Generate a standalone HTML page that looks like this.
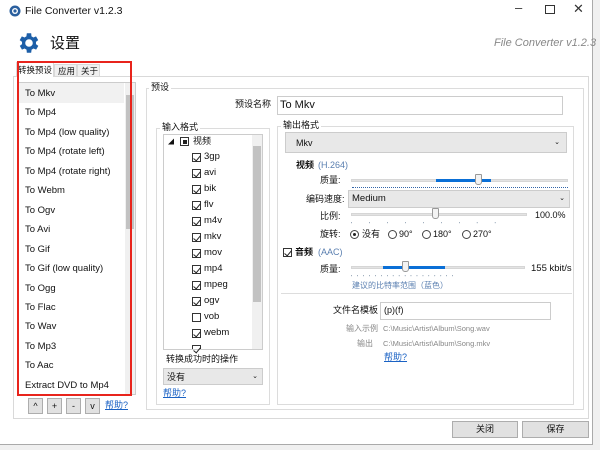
<!DOCTYPE html>
<html><head><meta charset="utf-8"><style>
*{box-sizing:border-box;margin:0;padding:0}
body{width:600px;height:450px;background:#f0f0f0;font-family:"Liberation Sans","Noto Sans CJK SC",sans-serif;font-size:9px;line-height:12px;color:#111;position:relative;overflow:hidden}
.a{position:absolute;white-space:nowrap}
.win{position:absolute;left:0;top:0;width:593px;height:445px;background:#fff;border-right:1px solid #aaa;border-bottom:1px solid #aaa}
.box{position:absolute;border:1px solid #dcdcdc}
.btn{position:absolute;background:#e1e1e1;border:1px solid #adadad;text-align:center;font-size:9px;line-height:14px}
.cb{position:absolute;width:9px;height:9px;border:1px solid #333;background:#fff}
.cb.c::after{content:"";position:absolute;left:2px;top:0px;width:3px;height:6px;border:solid #222;border-width:0 1.3px 1.3px 0;transform:rotate(40deg)}
.lnk{color:#1a62c4;text-decoration:underline}
.trk{position:absolute;height:3px;background:#e3e3e3;border:1px solid #d6d6d6}
.blue{position:absolute;height:3px;background:#0a6fd6}
.th{position:absolute;width:7px;height:11px;background:#f3f3f3;border:1px solid #999;border-radius:1px 1px 3px 3px}
.rd{position:absolute;width:9px;height:9px;border:1px solid #444;border-radius:50%;background:#fff}
</style></head><body>
<div class="win"></div>
<svg class="a" style="left:9px;top:5px" width="12" height="12" viewBox="0 0 12 12"><circle cx="6" cy="6" r="5.5" fill="#2a5f9e"/><circle cx="6" cy="6" r="3" fill="#fff"/><circle cx="6" cy="6" r="1.6" fill="#2a5f9e"/></svg>
<div class="a" style="left:25px;top:4px;font-size:10.5px;line-height:14px">File Converter v1.2.3</div>
<div class="a" style="left:515px;top:2px;font-size:13px;color:#333">–</div>
<div class="a" style="left:545px;top:5px;width:10px;height:9px;border:1px solid #333"></div>
<div class="a" style="left:573px;top:3px;font-size:13px;color:#333">✕</div>
<svg class="a" style="left:16px;top:30px" width="26" height="26" viewBox="0 0 24 24"><path fill="#1d5fa8" fill-rule="evenodd" d="M19.4 13a7.5 7.5 0 0 0 0-2l2.1-1.6-2-3.5-2.5 1a7.5 7.5 0 0 0-1.7-1L15 3h-4l-.4 2.9a7.5 7.5 0 0 0-1.7 1l-2.5-1-2 3.5L6.6 11a7.5 7.5 0 0 0 0 2l-2.1 1.6 2 3.5 2.5-1a7.5 7.5 0 0 0 1.7 1L11 21h4l.4-2.9a7.5 7.5 0 0 0 1.7-1l2.5 1 2-3.5zM13 15.5A3.5 3.5 0 1 1 13 8.5a3.5 3.5 0 0 1 0 7z" transform="translate(-1 0)"/></svg>
<div class="a" style="left:50px;top:34px;font-size:15px;line-height:20px">设置</div>
<div class="a" style="left:494px;top:37px;font-size:11px;font-style:italic;color:#888">File Converter v1.2.3</div>
<!-- tabs -->
<div class="box" style="left:13px;top:76px;width:576px;height:343px;border-color:#d9d9d9"></div>
<div class="a" style="left:16px;top:62px;width:38px;height:15px;background:#fff;border:1px solid #d9d9d9;border-bottom:none;font-size:8.5px;padding:1px 0 0 1px">转换预设</div>
<div class="a" style="left:54px;top:64px;width:23px;height:13px;background:#f0f0f0;border:1px solid #d9d9d9;font-size:8.5px;padding:0 0 0 3px">应用</div>
<div class="a" style="left:77px;top:64px;width:23px;height:13px;background:#f0f0f0;border:1px solid #d9d9d9;font-size:8.5px;padding:0 0 0 3px">关于</div>
<!-- list -->
<div class="box" style="left:18px;top:82px;width:118px;height:313px;border-color:#ccc"></div>
<div class="a" style="left:19px;top:83px;width:105px;height:20px;background:#f1f1f1"></div>
<div class="a" style="left:125px;top:83px;width:10px;height:311px;background:#f0f0f0"></div>
<div class="a" style="left:126px;top:95px;width:8px;height:134px;background:#c2c2c2"></div>
<div class="a" style="left:25px;top:84px;font-size:9.5px;line-height:19.45px">To Mkv<br>To Mp4<br>To Mp4 (low quality)<br>To Mp4 (rotate left)<br>To Mp4 (rotate right)<br>To Webm<br>To Ogv<br>To Avi<br>To Gif<br>To Gif (low quality)<br>To Ogg<br>To Flac<br>To Wav<br>To Mp3<br>To Aac<br>Extract DVD to Mp4</div>
<div class="a" style="left:17px;top:61px;width:115px;height:335px;border:2px solid #e8241c"></div>
<div class="btn" style="left:28px;top:398px;width:15px;height:16px">^</div>
<div class="btn" style="left:47px;top:398px;width:15px;height:16px">+</div>
<div class="btn" style="left:66px;top:398px;width:15px;height:16px">-</div>
<div class="btn" style="left:85px;top:398px;width:15px;height:16px">v</div>
<div class="a lnk" style="left:105px;top:399px">帮助?</div>
<!-- preset group -->
<div class="box" style="left:146px;top:88px;width:438px;height:322px"></div>
<div class="a" style="left:149px;top:81px;background:#fff;padding:0 2px">预设</div>
<div class="a" style="left:235px;top:98px">预设名称</div>
<div class="a" style="left:277px;top:96px;width:286px;height:19px;border:1px solid #ccc;font-size:11px;line-height:15px;padding:1px 2px">To Mkv</div>
<!-- input group -->
<div class="box" style="left:156px;top:128px;width:114px;height:277px"></div>
<div class="a" style="left:160px;top:121px;background:#fff;padding:0 2px">输入格式</div>
<div class="a" style="left:163px;top:134px;width:100px;height:216px;border:1px solid #ccc"></div>
<div class="a" style="left:252px;top:135px;width:10px;height:214px;background:#f0f0f0"></div>
<div class="a" style="left:253px;top:146px;width:8px;height:156px;background:#c2c2c2"></div>
<div class="a" style="left:168px;top:137px;font-size:6px">◢</div>
<div class="cb" style="left:180px;top:137px"><div style="position:absolute;left:1.5px;top:1.5px;width:4px;height:4px;background:#222"></div></div>
<div class="a" style="left:193px;top:135px">视频</div>
<div class="cb c" style="left:192px;top:153px"></div><div class="a" style="left:204px;top:151px;font-size:9.5px">3gp</div>
<div class="cb c" style="left:192px;top:169px"></div><div class="a" style="left:204px;top:167px;font-size:9.5px">avi</div>
<div class="cb c" style="left:192px;top:185px"></div><div class="a" style="left:204px;top:183px;font-size:9.5px">bik</div>
<div class="cb c" style="left:192px;top:201px"></div><div class="a" style="left:204px;top:199px;font-size:9.5px">flv</div>
<div class="cb c" style="left:192px;top:217px"></div><div class="a" style="left:204px;top:215px;font-size:9.5px">m4v</div>
<div class="cb c" style="left:192px;top:233px"></div><div class="a" style="left:204px;top:231px;font-size:9.5px">mkv</div>
<div class="cb c" style="left:192px;top:249px"></div><div class="a" style="left:204px;top:247px;font-size:9.5px">mov</div>
<div class="cb c" style="left:192px;top:265px"></div><div class="a" style="left:204px;top:263px;font-size:9.5px">mp4</div>
<div class="cb c" style="left:192px;top:281px"></div><div class="a" style="left:204px;top:279px;font-size:9.5px">mpeg</div>
<div class="cb c" style="left:192px;top:297px"></div><div class="a" style="left:204px;top:295px;font-size:9.5px">ogv</div>
<div class="cb" style="left:192px;top:313px"></div><div class="a" style="left:204px;top:311px;font-size:9.5px">vob</div>
<div class="cb c" style="left:192px;top:329px"></div><div class="a" style="left:204px;top:327px;font-size:9.5px">webm</div>
<div class="cb c" style="left:192px;top:345px;height:4px;border-bottom:none"></div>
<div class="a" style="left:166px;top:353px">转换成功时的操作</div>
<div class="a" style="left:163px;top:368px;width:100px;height:17px;background:#e8e8e8;border:1px solid #ccc;padding:2px 3px">没有<span style="position:absolute;right:4px;top:2px;font-size:7px">⌄</span></div>
<div class="a lnk" style="left:163px;top:387px">帮助?</div>
<!-- output group -->
<div class="box" style="left:277px;top:126px;width:297px;height:279px"></div>
<div class="a" style="left:281px;top:119px;background:#fff;padding:0 2px">输出格式</div>
<div class="a" style="left:285px;top:132px;width:282px;height:21px;background:#e8e8e8;border:1px solid #ccc;padding:4px 10px">Mkv<span style="position:absolute;right:6px;top:4px;font-size:7px">⌄</span></div>
<div class="a" style="left:296px;top:159px;font-weight:bold">视频</div>
<div class="a" style="left:318px;top:159px;color:#5a7fb0">(H.264)</div>
<div class="a" style="left:320px;top:174px">质量:</div>
<div class="trk" style="left:351px;top:179px;width:217px"></div>
<div class="blue" style="left:436px;top:179px;width:55px"></div>
<div class="th" style="left:475px;top:174px"></div>
<div class="a" style="left:352px;top:187px;width:216px;height:3px;border-top:1px dotted #36a"></div>
<div class="a" style="left:306px;top:193px">编码速度:</div>
<div class="a" style="left:348px;top:190px;width:222px;height:18px;background:#e8e8e8;border:1px solid #ccc;padding:2px 3px;font-size:9.5px">Medium<span style="position:absolute;right:4px;top:2px;font-size:7px">⌄</span></div>
<div class="a" style="left:320px;top:210px">比例:</div>
<div class="trk" style="left:351px;top:213px;width:176px"></div>
<div class="th" style="left:432px;top:208px"></div>
<div class="a" style="left:535px;top:209px">100.0%</div>
<div class="a" style="left:351px;top:219px;font-size:5px;color:#246;letter-spacing:17px">'''''''''</div>
<div class="a" style="left:320px;top:228px">旋转:</div>
<div class="rd" style="left:350px;top:230px"><div style="position:absolute;left:2px;top:2px;width:3px;height:3px;border-radius:50%;background:#222"></div></div>
<div class="a" style="left:362px;top:228px">没有</div>
<div class="rd" style="left:388px;top:230px"></div><div class="a" style="left:399px;top:228px">90°</div>
<div class="rd" style="left:422px;top:230px"></div><div class="a" style="left:433px;top:228px">180°</div>
<div class="rd" style="left:462px;top:230px"></div><div class="a" style="left:473px;top:228px">270°</div>
<div class="cb c" style="left:283px;top:248px"></div>
<div class="a" style="left:295px;top:246px;font-weight:bold">音频</div>
<div class="a" style="left:318px;top:246px;color:#5a7fb0">(AAC)</div>
<div class="a" style="left:320px;top:263px">质量:</div>
<div class="trk" style="left:351px;top:266px;width:174px"></div>
<div class="blue" style="left:383px;top:266px;width:62px"></div>
<div class="th" style="left:402px;top:261px"></div>
<div class="a" style="left:531px;top:263px;font-size:9.5px">155 kbit/s</div>
<div class="a" style="left:351px;top:272px;font-size:5px;color:#246;letter-spacing:5px">''''''''''''''''''</div>
<div class="a" style="left:352px;top:280px;color:#5a7fb0;font-size:8px">建议的比特率范围（蓝色）</div>
<div class="a" style="left:281px;top:293px;width:291px;height:1px;background:#ddd"></div>
<div class="a" style="left:333px;top:304px">文件名模板</div>
<div class="a" style="left:380px;top:302px;width:171px;height:18px;border:1px solid #ccc;padding:1px 3px">(p)(f)</div>
<div class="a" style="left:346px;top:323px;color:#888;font-size:8px">输入示例</div>
<div class="a" style="left:383px;top:323px;color:#888;font-size:7.5px">C:\Music\Artist\Album\Song.wav</div>
<div class="a" style="left:357px;top:338px;color:#888;font-size:8px">输出</div>
<div class="a" style="left:383px;top:338px;color:#888;font-size:7.5px">C:\Music\Artist\Album\Song.mkv</div>
<div class="a lnk" style="left:384px;top:351px">帮助?</div>
<div class="btn" style="left:452px;top:421px;width:66px;height:17px">关闭</div>
<div class="btn" style="left:522px;top:421px;width:67px;height:17px">保存</div>
</body></html>
